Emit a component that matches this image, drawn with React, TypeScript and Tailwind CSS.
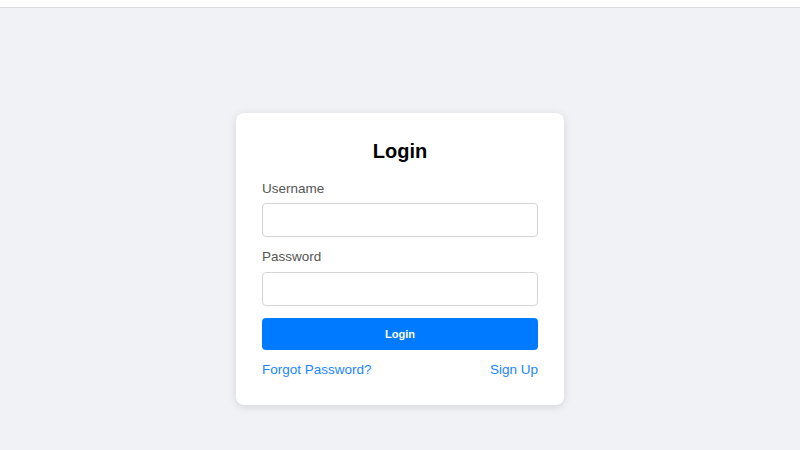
export default function App() {
  return (
    <div className="min-h-screen bg-[#f0f2f5] font-['Liberation_Sans',Arial,sans-serif]">
      <div className="h-2 bg-white border-b border-[#dcdde0]" />
      <div className="flex justify-center pt-[105px]">
        <div className="w-[328px] rounded-lg bg-white px-[26px] pt-[26px] pb-[27px] shadow-[0_2px_8px_rgba(0,0,0,0.12)]">
          <h2 className="text-center text-[20px] font-bold leading-6 text-black">Login</h2>
          <div className="mt-[18px]">
            <label className="block text-[13.5px] leading-4 text-[#555]">Username</label>
            <input className="mt-[6px] block h-[34px] w-full rounded border border-[#d5d5d5] bg-white px-2 text-sm outline-none" />
          </div>
          <div className="mt-[12px]">
            <label className="block text-[13.5px] leading-4 text-[#555]">Password</label>
            <input type="password" className="mt-[7px] block h-[34px] w-full rounded border border-[#d5d5d5] bg-white px-2 text-sm outline-none" />
          </div>
          <button className="mt-[12px] block h-[32px] w-full rounded bg-[#007bff] text-[11px] font-bold text-white">Login</button>
          <div className="mt-[12px] flex justify-between text-[13.5px] leading-4 text-[#1a85ff]">
            <a href="#">Forgot Password?</a>
            <a href="#">Sign Up</a>
          </div>
        </div>
      </div>
    </div>
  );
}
